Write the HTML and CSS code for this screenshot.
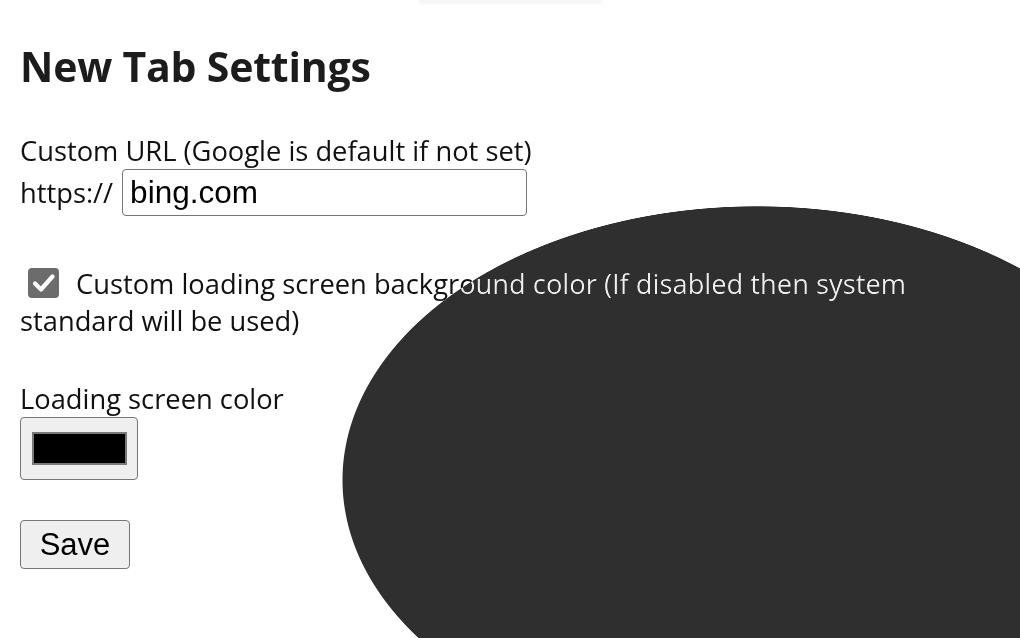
FILE: index.html
```html
<!DOCTYPE html>
<html lang="en">
<head>
<meta charset="utf-8">
<title>New Tab Settings</title>
<link rel="stylesheet" href="styles.css">
</head>
<body>
  <div class="toast-shadow"></div>
  <main class="settings">
    <h1 class="title">New Tab Settings</h1>

    <div class="field">
      <div class="label">Custom URL (Google is default if not set)</div>
      <div class="url-row">
        <span class="prefix">https://</span>
        <input class="url-input" type="text" value="bing.com">
      </div>
    </div>

    <p class="check-line">
      <span class="checkbox" role="checkbox" aria-checked="true">
        <svg viewBox="0 0 31 30" width="31" height="30" aria-hidden="true">
          <rect x="0" y="0" width="31" height="30" rx="4" fill="#6c6c6c"/>
          <path d="M7 15.5 L13 21.5 L24.5 8.5" fill="none" stroke="#ffffff" stroke-width="4.2" stroke-linecap="round" stroke-linejoin="round"/>
        </svg>
      </span>Custom loading screen background color (If disabled then system standard will be used)
    </p>

    <div class="field">
      <div class="label">Loading screen color</div>
      <div class="swatch"><span class="swatch-fill"></span></div>
    </div>

    <button class="save" type="button">Save</button>
  </main>

  <div class="blob blob-invert"></div>
  <div class="blob blob-tint"></div>
</body>
</html>
```

FILE: styles.css
```css
html {
  background: #ffffff;
}

body {
  margin: 0;
  width: 1020px;
  height: 638px;
  overflow: hidden;
  position: relative;
  background: #ffffff;
  color: #111111;
  font-family: "Open Sans", "Noto Sans", sans-serif;
  font-size: 27.3px;
  line-height: 37px;
}

.settings {
  padding: 42px 0 0 20px;
}

.title {
  margin: 0 0 41px 0;
  font-size: 41px;
  line-height: 49px;
  font-weight: 700;
  color: #1c1c1c;
  letter-spacing: -0.2px;
}

.label {
  height: 37px;
  white-space: nowrap;
}

.url-row {
  display: flex;
  align-items: baseline;
  gap: 9px;
}

.url-input {
  box-sizing: border-box;
  width: 405px;
  height: 47px;
  margin: 0;
  padding: 0 7px;
  border: 1px solid #767676;
  border-radius: 4px;
  background: #ffffff;
  color: #000000;
  font-family: "Liberation Sans", Arial, sans-serif;
  font-size: 31.5px;
  outline: none;
}

.check-line {
  margin: 49px 0 41px 0;
  width: 920px;
}

.checkbox {
  display: inline-block;
  width: 31px;
  height: 30px;
  margin: 0 17px 0 8px;
  vertical-align: -4px;
}

.checkbox svg {
  display: block;
}

.swatch {
  box-sizing: border-box;
  width: 118px;
  height: 63px;
  padding: 14px 10px 14px 11px;
  border: 1px solid #767676;
  border-radius: 4px;
  background: #efefef;
}

.swatch-fill {
  display: block;
  box-sizing: border-box;
  width: 95px;
  height: 33px;
  background: #000000;
  border: 2px solid #7a7a7a;
}

.save {
  display: block;
  box-sizing: border-box;
  width: 110px;
  height: 49px;
  margin: 40px 0 0 0;
  padding: 0;
  border: 1px solid #767676;
  border-radius: 4px;
  background: #efefef;
  color: #000000;
  font-family: "Liberation Sans", Arial, sans-serif;
  font-size: 31px;
  line-height: 1;
}

/* faint shadow of a popup peeking in at the top edge */
.toast-shadow {
  position: absolute;
  left: 418px;
  top: 0;
  width: 184px;
  height: 3px;
  border-radius: 0 0 6px 6px;
  background: rgba(0, 0, 0, 0.035);
  box-shadow: 0 1px 3px rgba(0, 0, 0, 0.05);
}

/* loading blob overlay, drawn as an ellipse inside a frame-sized layer:
   the first layer inverts what is beneath it, the second lifts the
   resulting black to a soft charcoal while the inverted text stays white */
.blob {
  position: absolute;
  left: 0;
  top: 0;
  width: 1020px;
  height: 638px;
  pointer-events: none;
}

.blob-invert {
  background: radial-gradient(415px 274px at 757px 480px, #ffffff calc(100% - 1.2px), rgba(255, 255, 255, 0) 100%);
  mix-blend-mode: difference;
}

.blob-tint {
  background: radial-gradient(415px 274px at 757px 480px, #2f2f2f calc(100% - 1.2px), rgba(47, 47, 47, 0) 100%);
  mix-blend-mode: lighten;
}
```
